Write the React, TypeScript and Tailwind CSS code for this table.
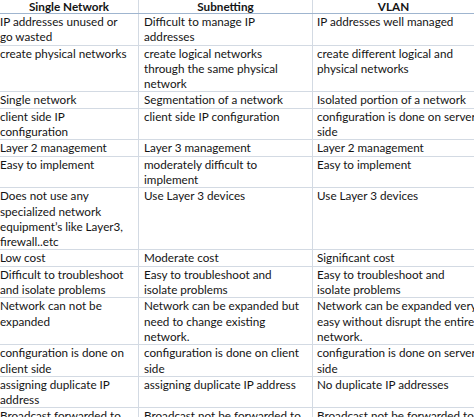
const rows: string[][][] = [
  [["IP addresses unused or", "go wasted"], ["Difficult to manage IP", "addresses"], ["IP addresses well managed"]],
  [["create physical networks"], ["create logical networks", "through the same physical", "network"], ["create different logical and", "physical networks"]],
  [["Single network"], ["Segmentation of a network"], ["Isolated portion of a network"]],
  [["client side IP", "configuration"], ["client side IP configuration"], ["configuration is done on server", "side"]],
  [["Layer 2 management"], ["Layer 3 management"], ["Layer 2 management"]],
  [["Easy to implement"], ["moderately difficult to", "implement"], ["Easy to implement"]],
  [["Does not use any", "specialized network", "equipment’s like Layer3,", "firewall..etc"], ["Use Layer 3 devices"], ["Use Layer 3 devices"]],
  [["Low cost"], ["Moderate cost"], ["Significant cost"]],
  [["Difficult to troubleshoot", "and isolate problems"], ["Easy to troubleshoot and", "isolate problems"], ["Easy to troubleshoot and", "isolate problems"]],
  [["Network can not be", "expanded"], ["Network can be expanded but", "need to change existing", "network."], ["Network can be expanded very", "easy without disrupt the entire", "network."]],
  [["configuration is done on", "client side"], ["configuration is done on client", "side"], ["configuration is done on server", "side"]],
  [["assigning duplicate IP", "address"], ["assigning duplicate IP address"], ["No duplicate IP addresses"]],
  [["Broadcast forwarded to", "all"], ["Broadcast not be forwarded to", "all"], ["Broadcast not be forwarded to", "all"]],
];

const cellCls = [
  "pl-0",
  "pl-[5px] border-l border-[#d3dae3]",
  "pl-[4px] border-l border-[#d3dae3]",
];

export default function App() {
  return (
    <div className="w-[474px] h-[417px] overflow-hidden bg-white text-[#141414] font-['Lato',sans-serif] text-[11.7px] leading-[15.3px]">
      <div className="w-[640px]">
        {/* header */}
        <div className="grid grid-cols-[138px_174px_180px] h-[14px] leading-[13px] border-b border-[#9fb5cf] font-bold">
          <div className="text-center">Single Network</div>
          <div className="text-center border-l border-[#d3dae3]">Subnetting</div>
          <div className="text-center border-l border-[#d3dae3] pr-[18px]">VLAN</div>
        </div>
        {rows.map((row, i) => (
          <div key={i} className="grid grid-cols-[138px_174px_180px] border-b border-[#d3dae3]">
            {row.map((lines, j) => (
              <div key={j} className={cellCls[j]}>
                {lines.map((l, k) => (
                  <div key={k} className="whitespace-nowrap">{l}</div>
                ))}
              </div>
            ))}
          </div>
        ))}
      </div>
    </div>
  );
}
